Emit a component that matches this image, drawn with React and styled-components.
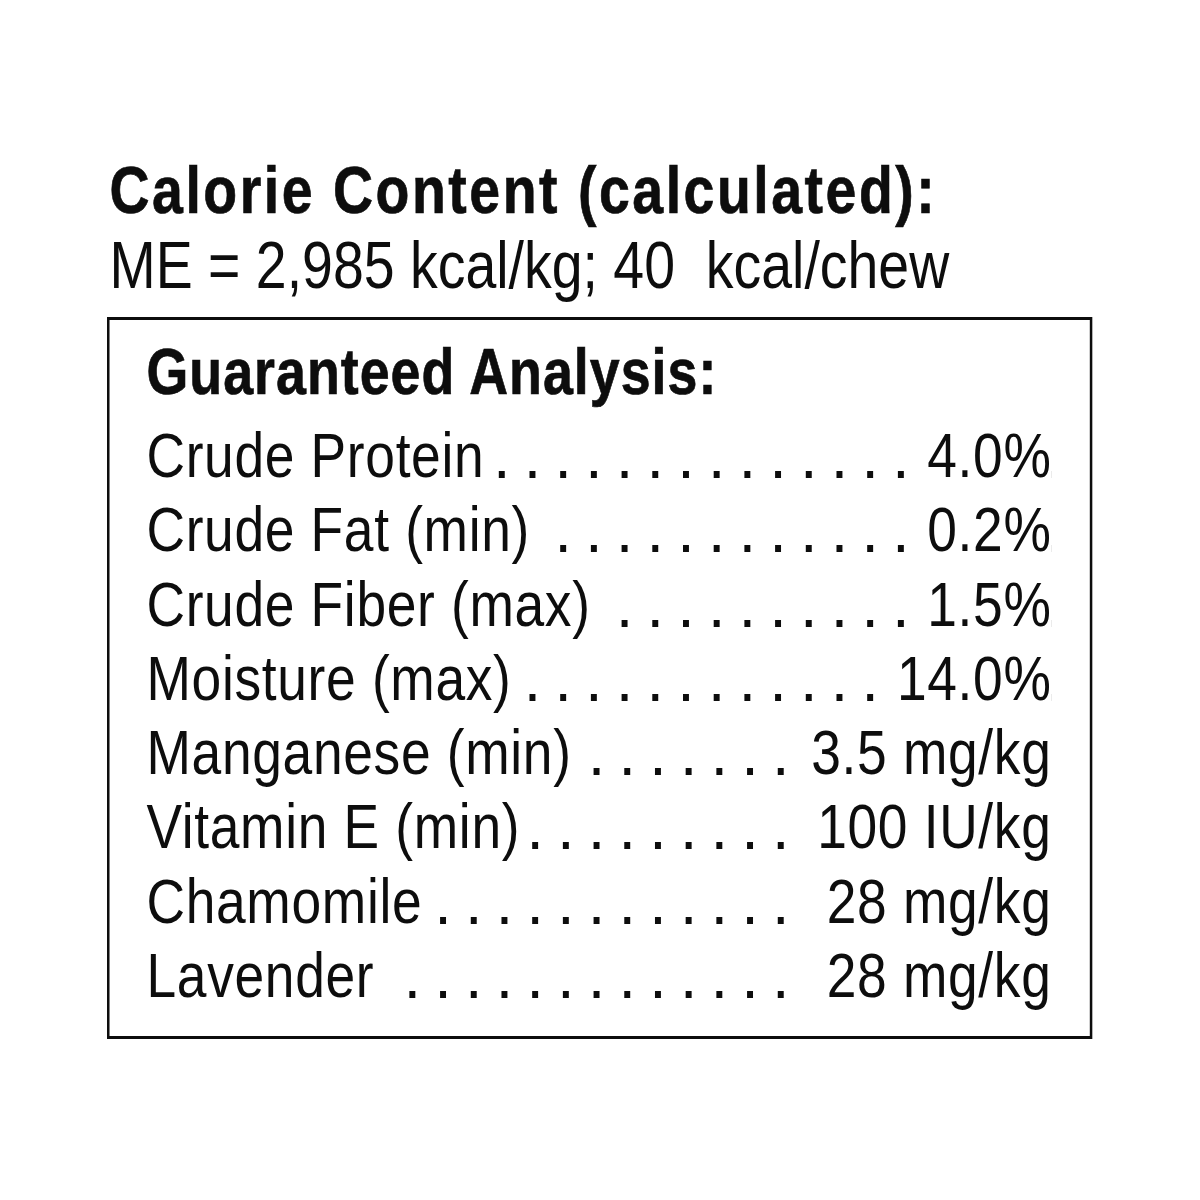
import React from "react";
import styled, { createGlobalStyle } from "styled-components";

// No condensed face is installed, so the label is set in Liberation Sans
// and squeezed horizontally to the narrow Helvetica look of the print.
const SQUEEZE = 0.84;
const DOT_STEP = 30.7 / SQUEEZE;

const GlobalStyle = createGlobalStyle`
  html, body {
    margin: 0;
    padding: 0;
    background: #fff;
    overflow: hidden;
  }
  body {
    font-family: "Liberation Sans", Arial, sans-serif;
    color: #0d0d0d;
  }
`;

// col = width of the value column (unsqueezed px); the leader dots stop at its edge
const rows = [
  { label: "Crude Protein", value: "4.0%", col: 175 },
  { label: "Crude Fat (min)", value: "0.2%", col: 175 },
  { label: "Crude Fiber (max)", value: "1.5%", col: 175 },
  { label: "Moisture (max)", value: "14.0%", col: 175 },
  { label: "Manganese (min)", value: "3.5 mg/kg", col: 318 },
  { label: "Vitamin E (min)", value: "100 IU/kg", col: 318 },
  { label: "Chamomile", value: "28 mg/kg", col: 318 },
  { label: "Lavender", value: "28 mg/kg", col: 318 },
];

function App() {
  return (
    <>
      <GlobalStyle />
      <Page>
        <Panel>
          <Title>Calorie Content (calculated):</Title>
          <Energy>ME = 2,985 kcal/kg; 40  kcal/chew</Energy>
          <Box>
            <Heading>Guaranteed Analysis:</Heading>
            {rows.map((row) => (
              <Row key={row.label} $col={row.col}>
                <Label>{row.label}</Label>
                <Value $col={row.col}>{row.value}</Value>
              </Row>
            ))}
          </Box>
        </Panel>
      </Page>
    </>
  );
}

export default App;

const Page = styled.main`
  width: 1200px;
  height: 1200px;
  box-sizing: border-box;
  padding: 153px 0 0 107px;
`;

const Panel = styled.section`
  width: ${985 / SQUEEZE}px;
  display: flex;
  flex-direction: column;
  transform: scaleX(${SQUEEZE});
  transform-origin: left top;
`;

const Title = styled.h1`
  margin: 0 0 0 3px;
  font-size: 66px;
  line-height: 75px;
  font-weight: 700;
  letter-spacing: 3px;
  white-space: nowrap;
  -webkit-text-stroke: 0.7px #0d0d0d;
`;

const Energy = styled.p`
  margin: 0 0 14px 3px;
  font-size: 66px;
  line-height: 75px;
  font-weight: 400;
  white-space: pre;
`;

const Box = styled.div`
  border: 3px solid #0d0d0d;
  border-left-width: 3.6px;
  border-right-width: 3.6px;
  padding: 15px 46px 24px 44px;
  display: flex;
  flex-direction: column;
`;

const Heading = styled.h2`
  margin: 0 0 9px;
  font-size: 64px;
  line-height: 74px;
  font-weight: 700;
  letter-spacing: 1.2px;
  white-space: nowrap;
  -webkit-text-stroke: 0.7px #0d0d0d;
`;

const Row = styled.div`
  display: flex;
  justify-content: space-between;
  font-size: 63.5px;
  line-height: 74.3px;
  letter-spacing: 0.8px;
  white-space: nowrap;
  background-image: linear-gradient(
    to left,
    #0d0d0d 7.2px,
    transparent 7.2px
  );
  background-size: ${DOT_STEP}px 7px;
  background-repeat: repeat-x;
  background-position: right ${(p) => p.$col}px top 53px;
`;

const Label = styled.span`
  background: #fff;
  padding-right: 14px;
`;

const Value = styled.span`
  flex-shrink: 0;
  box-sizing: border-box;
  background: #fff;
  min-width: ${(p) => p.$col}px;
  padding-left: 10px;
  margin-right: -0.8px;
  text-align: right;
`;
